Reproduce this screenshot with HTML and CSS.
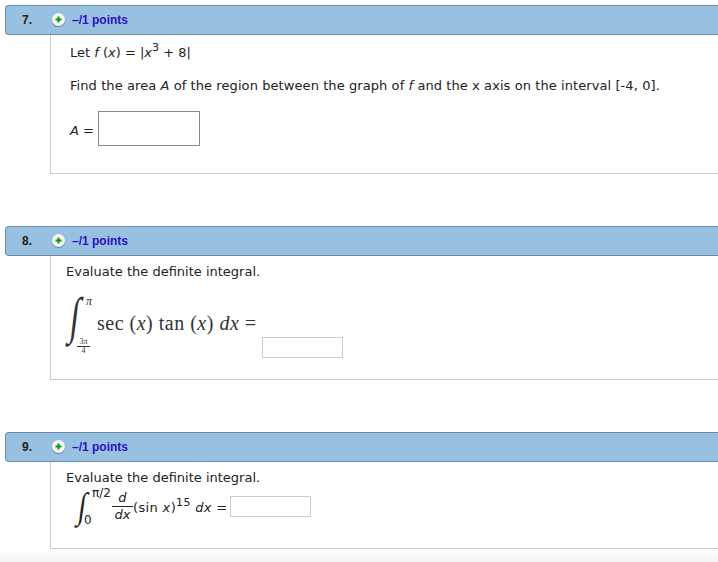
FILE: index.html

```html
<!DOCTYPE html>
<html lang="en">
<head>
  <meta charset="UTF-8">
  <title>Questions</title>
  <link rel="stylesheet" href="styles.css">
</head>
<body>
<div class="question q7">
  <div class="bar">
    <span class="num">7.</span>
    <span class="plus"><svg width="9" height="9" viewBox="0 0 9 9"><path d="M4.5 1.5v6M1.5 4.5h6" stroke="#0a9a12" stroke-width="2" fill="none"/></svg></span>
    <span class="points">–/1 points</span>
  </div>
  <div class="card">
    <p class="line let">Let <i>f</i> (<i>x</i>) = |<i>x</i><sup>3</sup> + 8|</p>
    <p class="line find">Find the area <i>A</i> of the region between the graph of <i>f</i> and the x axis on the interval [-4, 0].</p>
    <div class="answer">
      <span class="label"><i>A</i> =</span>
      <span class="input big"></span>
    </div>
  </div>
</div>

<div class="question q8">
  <div class="bar">
    <span class="num">8.</span>
    <span class="plus"><svg width="9" height="9" viewBox="0 0 9 9"><path d="M4.5 1.5v6M1.5 4.5h6" stroke="#0a9a12" stroke-width="2" fill="none"/></svg></span>
    <span class="points">–/1 points</span>
  </div>
  <div class="card">
    <p class="line eval">Evaluate the definite integral.</p>
    <div class="tex">
      <span class="int">∫</span>
      <div class="limits">
        <span class="up"><i>π</i></span>
        <span class="frac"><span class="top">3<i>π</i></span><span>4</span></span>
      </div>
      <span class="expr">sec (<i>x</i>) tan (<i>x</i>) <i>dx</i> =</span>
      <span class="input small"></span>
    </div>
  </div>
</div>

<div class="question q9">
  <div class="bar">
    <span class="num">9.</span>
    <span class="plus"><svg width="9" height="9" viewBox="0 0 9 9"><path d="M4.5 1.5v6M1.5 4.5h6" stroke="#0a9a12" stroke-width="2" fill="none"/></svg></span>
    <span class="points">–/1 points</span>
  </div>
  <div class="card">
    <p class="line eval">Evaluate the definite integral.</p>
    <div class="sum">
      <span class="int2">∫</span>
      <div class="limits2">
        <span class="upper">π/2</span>
        <span class="lower">0</span>
      </div>
      <span class="frac2"><i class="d">d</i><i>dx</i></span>
      <span class="rest">(sin <i>x</i>)<sup>15</sup> <i>dx</i> =</span>
      <span class="input small"></span>
    </div>
  </div>
</div>
<div class="foot"></div>
</body>
</html>
```

FILE: styles.css

```css
* {
  margin: 0;
  padding: 0;
  box-sizing: border-box;
}

html, body {
  background-color: #fff;
}

body {
  padding-top: 5px;
  font-family: "DejaVu Sans", Verdana, sans-serif;
  font-size: 13px;
  color: #222;
  overflow: hidden;
}

.bar {
  display: flex;
  align-items: center;
  height: 30px;
  margin-left: 5px;
  padding-bottom: 1px;
  background-color: #98c1e1;
  border: 1px solid #6b8ba6;
  border-right: 0;
  border-radius: 4px 0 0 4px;
  font-family: "Liberation Sans", Arial, sans-serif;
  font-size: 12px;
  font-weight: bold;
}

.num {
  width: 46px;
  padding-left: 16px;
  color: #222;
}

.plus {
  display: flex;
  align-items: center;
  justify-content: center;
  width: 13px;
  height: 13px;
  margin-right: 7px;
  background-color: #f4f6f4;
  border-radius: 50%;
  box-shadow: 0 1px 1px #69859b;
}

.points {
  color: #2f10c4;
}

.card {
  margin-left: 50px;
  border-left: 1px solid #ccc;
  border-bottom: 1px solid #ccc;
}

sup {
  font-size: 11px;
  line-height: 0;
  vertical-align: 6px;
}

.q7 .card {
  height: 139px;
  padding: 7px 0 0 19px;
}

.let {
  height: 33px;
  line-height: 22px;
}

.find {
  height: 28px;
  line-height: 22px;
  letter-spacing: .08px;
}

.answer {
  display: flex;
  align-items: center;
  gap: 4px;
  margin-top: 8px;
}

.label {
  padding-top: 3px;
}

.input {
  display: block;
  background-color: #fff;
}

.big {
  width: 102px;
  height: 35px;
  border: 1px solid #888;
}

.small {
  width: 81px;
  height: 21px;
  border: 1px solid #ccc;
}

.q8 {
  margin-top: 52px;
}

.q8 .card {
  height: 124px;
  padding: 6px 0 0 14px;
}

.eval {
  line-height: 20px;
  padding-left: 1px;
}

.tex {
  display: flex;
  font-family: "Liberation Serif", "Times New Roman", serif;
  color: #333;
  margin-top: 9px;
  height: 70px;
}

.int {
  width: 20px;
  height: 50px;
  font-size: 34px;
  line-height: 50px;
  text-align: center;
  transform: scaleY(1.5) skewX(-10deg);
}

.limits {
  display: flex;
  flex-direction: column;
  justify-content: space-between;
  width: 13px;
  height: 64px;
  padding-top: 5px;
  font-size: 12px;
  line-height: 10px;
}

.up {
  margin-left: 1px;
}

.frac {
  display: flex;
  flex-direction: column;
  align-items: center;
  margin-left: -8px;
  font-size: 8px;
  line-height: 8px;
  width: 13px;
}

.frac .top {
  border-bottom: 1px solid #333;
  width: 100%;
  text-align: center;
}

.expr {
  margin: 20px 0 0 -1px;
  font-size: 20px;
  line-height: 24px;
  width: 165px;
  letter-spacing: .5px;
  white-space: nowrap;
}

.tex .input {
  margin-top: 46px;
}

.q9 {
  margin-top: 52px;
}

.q9 .card {
  height: 87px;
  padding: 6px 0 0 14px;
}

.sum {
  display: flex;
  height: 44px;
}

.int2 {
  width: 18px;
  margin-left: 8px;
  font-family: "Liberation Serif", serif;
  font-size: 28px;
  line-height: 38px;
  text-align: center;
  transform: scaleY(1.3) skewX(-10deg);
}

.limits2 {
  display: flex;
  flex-direction: column;
  justify-content: space-between;
  width: 21px;
  height: 41px;
  margin-top: -2px;
  font-size: 12px;
  line-height: 14px;
}

.upper {
  margin-left: 1px;
}

.lower {
  margin-left: -7px;
}

.frac2 {
  display: flex;
  flex-direction: column;
  align-items: center;
  width: 21px;
  margin-top: 2px;
  font-size: 13px;
  line-height: 16px;
}

.frac2 .d {
  width: 100%;
  text-align: center;
  border-bottom: 1px solid #222;
}

.rest {
  margin-top: 10px;
  line-height: 20px;
  width: 97px;
  letter-spacing: .35px;
  white-space: nowrap;
}

.sum .input {
  margin-top: 8px;
}

.foot {
  height: 14px;
  background: linear-gradient(#fff, #f3f3f3);
}
```
